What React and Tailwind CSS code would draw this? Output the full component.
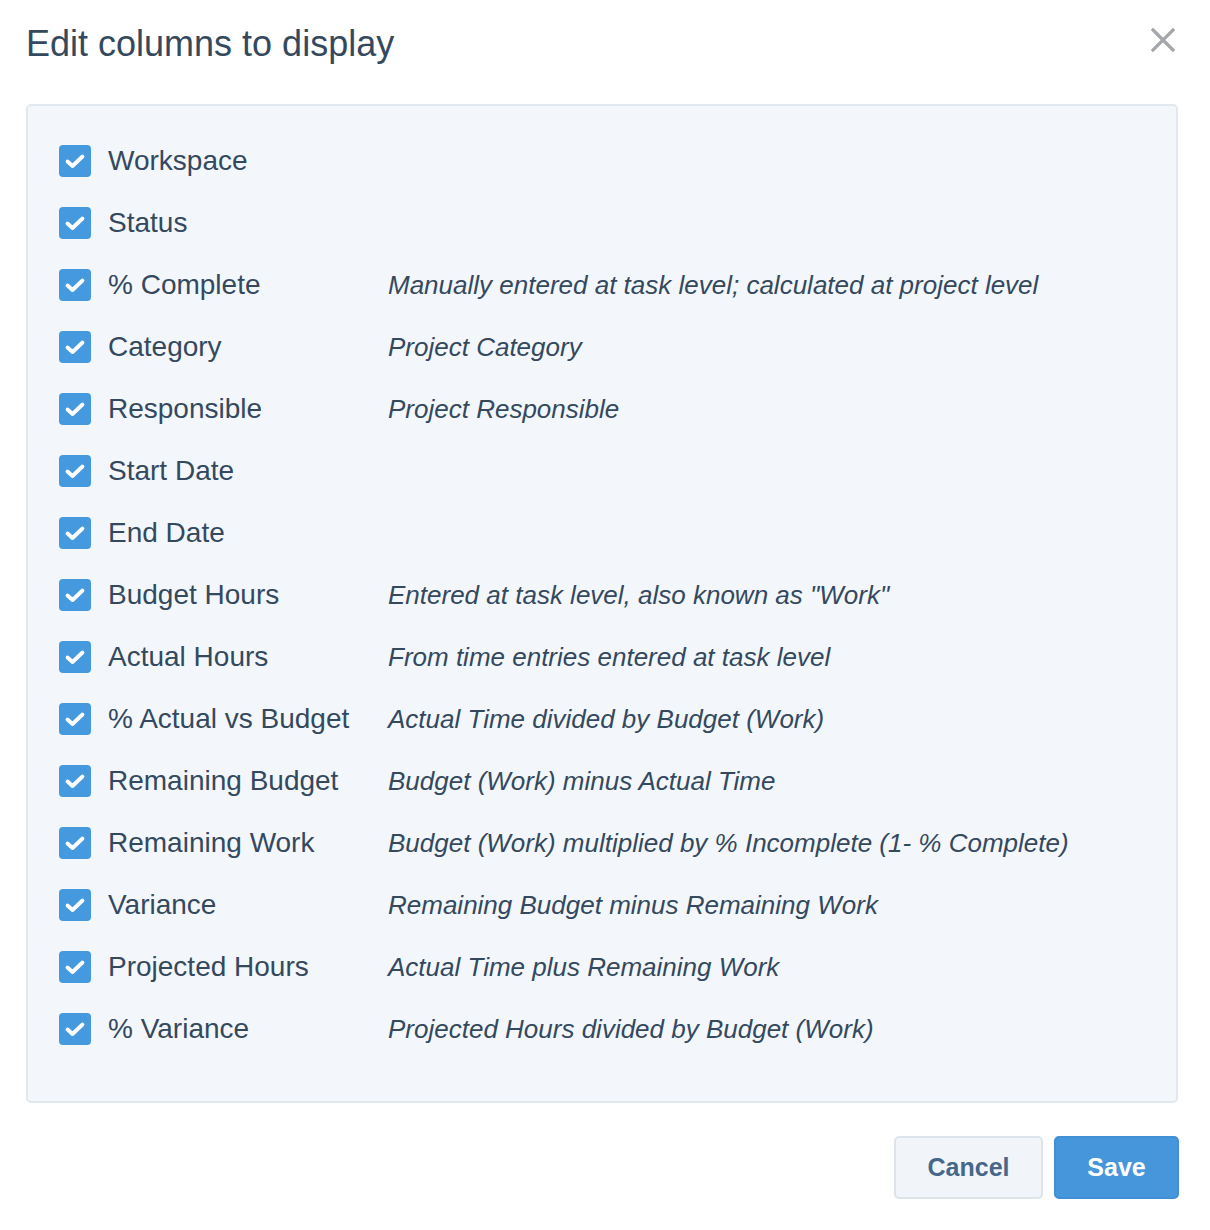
import React from "react";

const rows = [
  ["Workspace", ""],
  ["Status", ""],
  ["% Complete", "Manually entered at task level; calculated at project level"],
  ["Category", "Project Category"],
  ["Responsible", "Project Responsible"],
  ["Start Date", ""],
  ["End Date", ""],
  ["Budget Hours", 'Entered at task level, also known as "Work"'],
  ["Actual Hours", "From time entries entered at task level"],
  ["% Actual vs Budget", "Actual Time divided by Budget (Work)"],
  ["Remaining Budget", "Budget (Work) minus Actual Time"],
  ["Remaining Work", "Budget (Work) multiplied by % Incomplete (1- % Complete)"],
  ["Variance", "Remaining Budget minus Remaining Work"],
  ["Projected Hours", "Actual Time plus Remaining Work"],
  ["% Variance", "Projected Hours divided by Budget (Work)"],
];

function Check() {
  return (
    <div className="w-[32px] h-[32px] rounded-[4px] bg-[#4599de] flex items-center justify-center shrink-0">
      <svg width="32" height="32" viewBox="0 0 32 32" fill="none">
        <path d="M8.5 16.5 L13.5 21 L23.5 11.5" stroke="#fff" strokeWidth="3.8" strokeLinecap="round" strokeLinejoin="round" />
      </svg>
    </div>
  );
}

export default function App() {
  return (
    <div className="w-[1210px] h-[1230px] bg-white text-[#344a5f]" style={{ fontFamily: '"Liberation Sans", Arial, sans-serif' }}>
      <div className="flex items-center justify-between pl-[26px] pr-[34px] h-[86px]">
        <h1 className="text-[36px] leading-none text-[#34495e] font-normal pt-[2px]">Edit columns to display</h1>
        <svg width="26" height="26" viewBox="0 0 26 26" className="mt-[-6px]">
          <path d="M3 3 L23 23 M23 3 L3 23" stroke="#a3a7ab" strokeWidth="3.2" strokeLinecap="square" />
        </svg>
      </div>
      <div className="ml-[26px] mr-[32px] mt-[18px] h-[999px] rounded-[5px] border-2 border-[#e1e8ef] bg-[#f3f7fb] pl-[31px] pt-[24px]">
        {rows.map(([label, desc]) => (
          <div key={label} className="flex items-center h-[62px]">
            <Check />
            <div className="w-[297px] pl-[17px] text-[28px] leading-none text-[#34495e]">{label}</div>
            <div className="text-[26px] italic leading-none text-[#34495e]">{desc}</div>
          </div>
        ))}
      </div>
      <div className="flex justify-end gap-[11px] pr-[31px] mt-[33px]">
        <button className="w-[149px] h-[63px] rounded-[5px] border-2 border-[#dde4ec] bg-[#f1f5f9] text-[#456789] text-[25px] font-bold">Cancel</button>
        <button className="w-[125px] h-[63px] rounded-[5px] bg-[#4596db] border-2 border-[#4190d6] text-white text-[25px] font-bold">Save</button>
      </div>
    </div>
  );
}
